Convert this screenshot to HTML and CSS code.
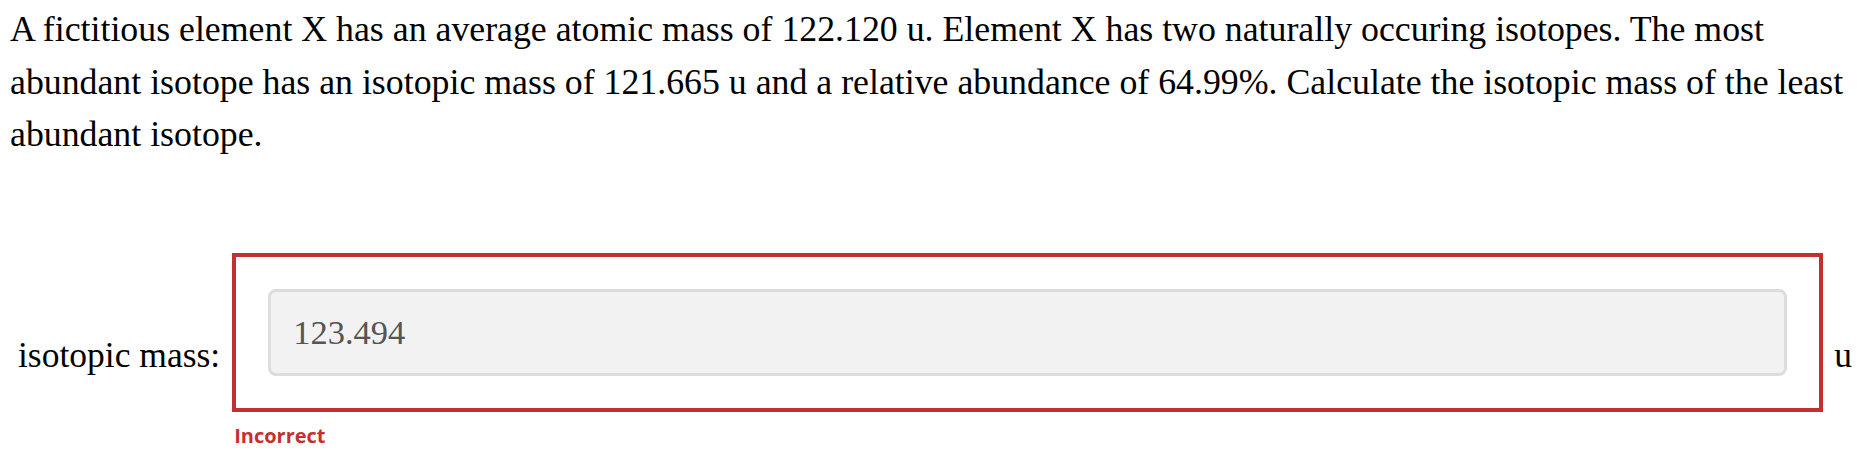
FILE: index.html
```html
<!DOCTYPE html>
<html lang="en">
<head>
<meta charset="utf-8">
<title>Isotopic mass question</title>
<link rel="stylesheet" href="styles.css">
</head>
<body>
<div class="page">
  <p class="question">A fictitious element X has an average atomic mass of 122.120 u. Element X has two naturally occuring isotopes. The most abundant isotope has an isotopic mass of 121.665 u and a relative abundance of 64.99%. Calculate the isotopic mass of the least abundant isotope.</p>
  <div class="answer-row">
    <label class="answer-label" for="mass">isotopic mass:</label>
    <div class="answer-field">
      <div class="answer-box">
        <input id="mass" class="answer-input" type="text" value="123.494" readonly>
      </div>
      <div class="feedback">Incorrect</div>
    </div>
    <span class="unit">u</span>
  </div>
</div>
</body>
</html>
```
FILE: styles.css
```css
html, body {
  margin: 0;
  padding: 0;
  background: #ffffff;
}

.page {
  padding: 3px 3px 0 10px;
  font-family: "Liberation Serif", "Times New Roman", serif;
  color: #000000;
}

.question {
  margin: 0;
  font-size: 35.8px;
  line-height: 52.5px;
}

.answer-row {
  display: flex;
  align-items: flex-start;
  margin-top: 92.5px;
  padding-left: 8px;
  padding-right: 3px;
}

.answer-label,
.unit {
  font-size: 35.5px;
  line-height: 52.5px;
  margin-top: 76px;
  white-space: nowrap;
}

.answer-label {
  margin-right: 12px;
}

.unit {
  margin-left: 11px;
}

.answer-field {
  flex: 1;
  display: flex;
  flex-direction: column;
}

.answer-box {
  border: 4px solid #c43030;
  padding: 32px;
}

.answer-input {
  display: block;
  width: 100%;
  box-sizing: border-box;
  height: 87px;
  margin: 0;
  padding: 0 22px;
  border: 3px solid #dddddd;
  border-radius: 8px;
  background: #f2f2f2;
  color: #555555;
  font-family: "Liberation Serif", "Times New Roman", serif;
  font-size: 34.5px;
  outline: none;
}

.feedback {
  margin-top: 10px;
  margin-left: 2px;
  font-family: "Open Sans", "Liberation Sans", sans-serif;
  font-weight: 700;
  font-size: 20px;
  line-height: 27px;
  color: #c43030;
}
```
